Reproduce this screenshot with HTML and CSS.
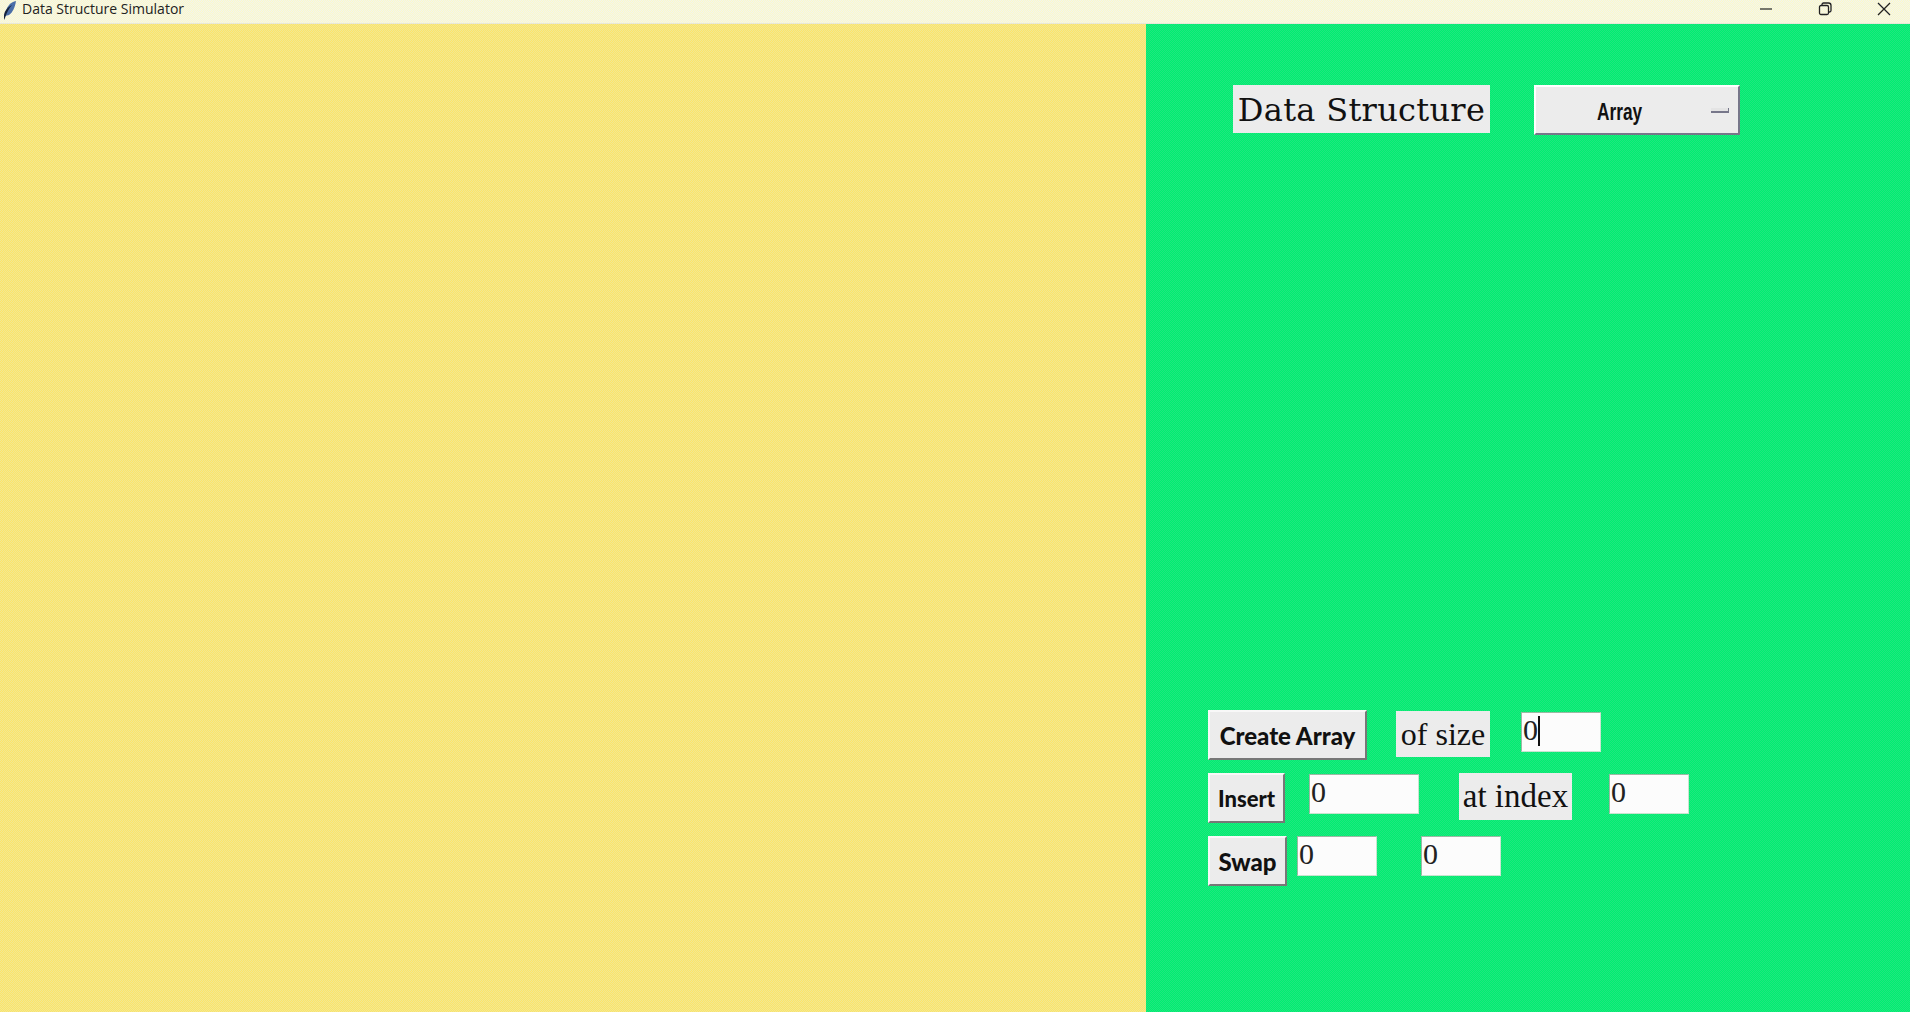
FILE: index.html
```html
<!DOCTYPE html>
<html>
<head>
    <title>Data Structure Simulator</title>
    <link rel="stylesheet" href="styles.css">
</head>

<body>

    <div class="titlebar">
        <svg class="app-icon" width="14" height="20" viewBox="0 0 14 20">
            <path d="M13 0C8 1 4 5 3 10L2 15L6 14C10 11 12 6 13 0Z" fill="#4a6ea8"/>
            <path d="M9 4C6 7 4 11 2 17L1 19L1 14C2 9 5 6 9 4Z" fill="#15233d"/>
        </svg>
        <span class="app-title">Data Structure Simulator</span>
        <div class="window-controls">
            <svg class="win-icon" width="14" height="14" viewBox="0 0 14 14">
                <path d="M1 7H13" stroke="#222" stroke-width="1.2"/>
            </svg>
            <svg class="win-icon" width="14" height="14" viewBox="0 0 14 14">
                <rect x="1.500" y="3.500" width="9" height="9" rx="1.500" fill="none" stroke="#222" stroke-width="1.300"/>
                <path d="M4 3V2.500C4 1.700 4.700 1 5.500 1H10.500C11.900 1 13 2.100 13 3.500V8.500C13 9.300 12.300 10 11.500 10H11" fill="none" stroke="#222" stroke-width="1.300"/>
            </svg>
            <svg class="win-icon" width="14" height="14" viewBox="0 0 14 14">
                <path d="M1 1L13 13M13 1L1 13" stroke="#222" stroke-width="1.300"/>
            </svg>
        </div>
    </div>

    <div class="main">
        <div class="canvas"></div>

        <div class="side">
            <div class="header-row">
                <div class="label label-title">Data Structure</div>
                <div class="optionmenu">
                    <span class="optionmenu-text">Array</span>
                    <span class="optionmenu-mark"></span>
                </div>
            </div>

            <div class="controls">
                <div class="row">
                    <button class="btn btn-create">Create Array</button>
                    <div class="label label-size">of size</div>
                    <div class="entry entry-size">0<span class="caret"></span></div>
                </div>
                <div class="row">
                    <button class="btn btn-insert">Insert</button>
                    <div class="entry entry-value">0</div>
                    <div class="label label-index">at index</div>
                    <div class="entry entry-index">0</div>
                </div>
                <div class="row">
                    <button class="btn btn-swap">Swap</button>
                    <div class="entry entry-swap-a">0</div>
                    <div class="entry entry-swap-b">0</div>
                </div>
            </div>
        </div>
    </div>

</body>

</html>
```

FILE: styles.css
```css
* {
    box-sizing: border-box;
}

html,
body {
    margin: 0;
    height: 100%;
    overflow: hidden;
}

body {
    display: flex;
    flex-direction: column;
}

.titlebar {
    height: 24px;
    flex: none;
    display: flex;
    align-items: center;
    padding-left: 3px;
    padding-bottom: 6px;
    background-color: #f7f6dc;
    background-image: repeating-conic-gradient(#fdf9c8 0 25%, #f1f4ee 0 50%);
    background-size: 2px 2px;
    border-bottom: 1px solid #e8e8d8;
}

.app-icon {
    flex: none;
    margin-top: 4px;
}

.app-title {
    margin-left: 5px;
    font-family: "Open Sans", "Liberation Sans", sans-serif;
    font-size: 14px;
    color: #222;
}

.window-controls {
    margin-left: auto;
    display: flex;
    align-items: center;
    padding-right: 19px;
}

.win-icon {
    margin-left: 45px;
}

.main {
    flex: 1;
    display: flex;
}

.canvas {
    width: 1146px;
    background-color: #f7e67e;
    background-image: repeating-conic-gradient(#fde468 0 25%, #f1e894 0 50%);
    background-size: 2px 2px;
}

.side {
    flex: 1;
    display: flex;
    flex-direction: column;
    background-color: #10ea78;
    background-image: repeating-conic-gradient(#00ee70 0 25%, #20e680 0 50%);
    background-size: 2px 2px;
}

.header-row {
    display: flex;
    align-items: flex-start;
    margin-top: 61px;
    padding-left: 87px;
}

.label {
    background-color: #ececec;
    color: #111;
    font-family: "Liberation Serif", serif;
    display: flex;
    align-items: center;
    justify-content: center;
}

.label-title {
    width: 257px;
    height: 48px;
    padding-top: 2px;
    font-family: "DejaVu Serif", serif;
    font-size: 32px;
    letter-spacing: 0.3px;
}

.optionmenu {
    width: 206px;
    height: 50px;
    margin-left: 44px;
    padding-left: 61px;
    display: flex;
    align-items: center;
    background-color: #ececec;
    border: 2px solid;
    border-color: #fff #77778a #77778a #fff;
    font-family: "Liberation Sans", sans-serif;
    font-weight: bold;
    font-size: 24px;
    color: #111;
}

.optionmenu-text {
    display: inline-block;
    margin-top: 3px;
    transform: scaleX(0.72);
    transform-origin: left center;
}

.optionmenu-mark {
    width: 18px;
    height: 5px;
    margin-left: auto;
    margin-right: 9px;
    background-color: #e4e4e4;
    border-bottom: 2px solid #77778a;
    border-right: 1px solid #77778a;
}

.controls {
    margin-top: 575px;
    padding-left: 62px;
    display: flex;
    flex-direction: column;
    gap: 13px;
}

.row {
    display: flex;
    align-items: flex-start;
}

.btn {
    height: 50px;
    padding: 0;
    background-color: #ececec;
    border: 2px solid;
    border-color: #f8f8f8 #777 #777 #f8f8f8;
    font-family: "Lato", sans-serif;
    font-weight: 900;
    font-size: 22px;
    color: #111;
}

.btn-create {
    width: 159px;
    font-size: 24px;
}

.btn-insert {
    width: 77px;
}

.btn-swap {
    width: 79px;
    font-size: 24px;
}

.label-size {
    width: 94px;
    height: 46px;
    margin-top: 1px;
    margin-left: 29px;
    font-size: 32px;
}

.label-index {
    width: 113px;
    height: 47px;
    margin-left: 40px;
    font-size: 33px;
}

.entry {
    height: 40px;
    width: 80px;
    margin-top: 1px;
    padding-left: 1px;
    background-color: #fcfcfc;
    border: 1px solid;
    border-color: #9cb8a4 #c8e4d0 #c8e4d0 #9cb8a4;
    font-family: "Liberation Serif", serif;
    font-size: 30px;
    line-height: 34px;
    color: #222;
    display: flex;
}

.entry-size {
    margin-top: 2px;
    margin-left: 31px;
}

.entry-value {
    width: 110px;
    margin-left: 24px;
}

.entry-index {
    margin-left: 37px;
}

.entry-swap-a {
    margin-top: 0;
    margin-left: 10px;
}

.entry-swap-b {
    margin-top: 0;
    margin-left: 44px;
}

.caret {
    width: 2px;
    height: 30px;
    margin-top: 3px;
    background-color: #111;
}
```
